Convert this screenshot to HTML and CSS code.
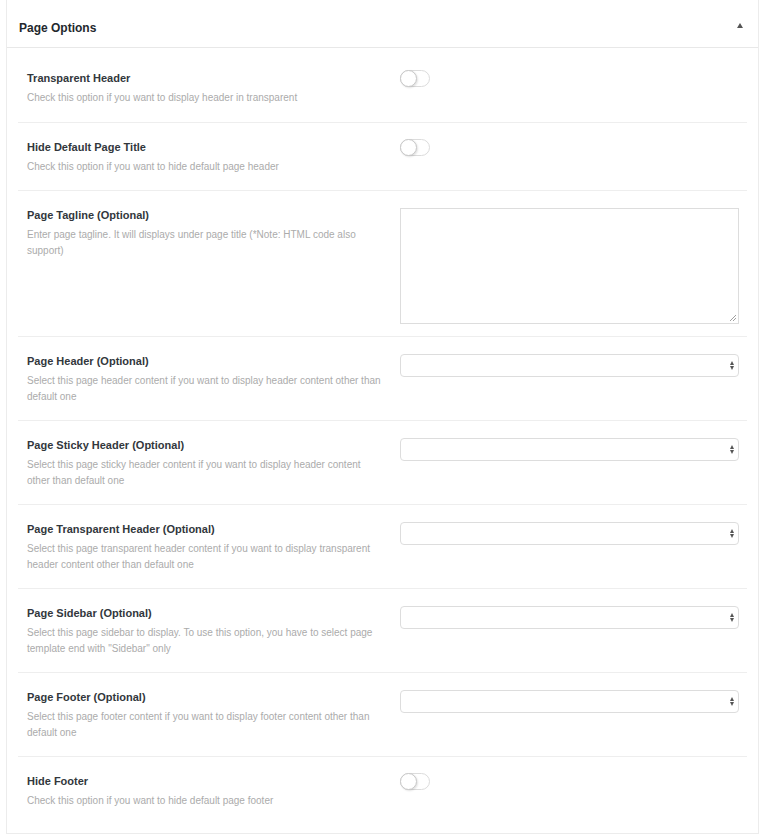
FILE: index.html
```html
<!DOCTYPE html>
<html>
<head>
<meta charset="utf-8">
<link rel="stylesheet" href="styles.css">
</head>
<body>
<div class="panel">
  <div class="panel-head">
    <h2 class="panel-title">Page Options</h2>
    <span class="caret"></span>
  </div>
  <div class="panel-body">
    <div class="row">
      <div class="info">
        <div class="label">Transparent Header</div>
        <div class="desc">Check this option if you want to display header in transparent</div>
      </div>
      <div class="control"><span class="toggle"><span class="knob"></span></span></div>
    </div>
    <div class="row">
      <div class="info">
        <div class="label">Hide Default Page Title</div>
        <div class="desc">Check this option if you want to hide default page header</div>
      </div>
      <div class="control"><span class="toggle"><span class="knob"></span></span></div>
    </div>
    <div class="row row-tall">
      <div class="info">
        <div class="label">Page Tagline (Optional)</div>
        <div class="desc">Enter page tagline. It will displays under page title (*Note: HTML code also support)</div>
      </div>
      <div class="control"><div class="textarea"><svg class="grip" width="8" height="8" viewBox="0 0 8 8"><path d="M7 1 L1 7 M7 4 L4 7" stroke="#888" stroke-width="0.8" fill="none"/></svg></div></div>
    </div>
    <div class="row">
      <div class="info">
        <div class="label">Page Header (Optional)</div>
        <div class="desc">Select this page header content if you want to display header content other than default one</div>
      </div>
      <div class="control"><div class="select"><span class="arrows"></span></div></div>
    </div>
    <div class="row">
      <div class="info">
        <div class="label">Page Sticky Header (Optional)</div>
        <div class="desc">Select this page sticky header content if you want to display header content other than default one</div>
      </div>
      <div class="control"><div class="select"><span class="arrows"></span></div></div>
    </div>
    <div class="row">
      <div class="info">
        <div class="label">Page Transparent Header (Optional)</div>
        <div class="desc">Select this page transparent header content if you want to display transparent header content other than default one</div>
      </div>
      <div class="control"><div class="select"><span class="arrows"></span></div></div>
    </div>
    <div class="row">
      <div class="info">
        <div class="label">Page Sidebar (Optional)</div>
        <div class="desc">Select this page sidebar to display. To use this option, you have to select page template end with "Sidebar" only</div>
      </div>
      <div class="control"><div class="select"><span class="arrows"></span></div></div>
    </div>
    <div class="row">
      <div class="info">
        <div class="label">Page Footer (Optional)</div>
        <div class="desc">Select this page footer content if you want to display footer content other than default one</div>
      </div>
      <div class="control"><div class="select"><span class="arrows"></span></div></div>
    </div>
    <div class="row">
      <div class="info">
        <div class="label">Hide Footer</div>
        <div class="desc">Check this option if you want to hide default page footer</div>
      </div>
      <div class="control"><span class="toggle"><span class="knob"></span></span></div>
    </div>
  </div>
</div>
</body>
</html>
```
FILE: styles.css
```css
html, body {
  margin: 0;
  padding: 0;
  background: #fff;
}
body {
  font-family: "Liberation Sans", Arial, sans-serif;
  width: 768px;
  height: 838px;
  overflow: hidden;
}
.panel {
  margin-left: 6px;
  width: 751px;
  border: 1px solid #ececec;
  border-top: none;
  background: #fff;
}
.panel-head {
  height: 48px;
  border-bottom: 1px solid #e8e8e8;
  display: flex;
  align-items: center;
  justify-content: space-between;
  padding: 0 15px 0 12px;
  box-sizing: border-box;
}
.panel-title {
  margin: 0;
  font-size: 12px;
  font-weight: bold;
  color: #23282d;
  padding-top: 8px;
}
.caret {
  width: 0;
  height: 0;
  border-left: 3.5px solid transparent;
  border-right: 3.5px solid transparent;
  border-bottom: 5px solid #555;
  margin-top: 3px;
}
.panel-body {
  padding: 6px 11px 8px;
}
.row {
  display: grid;
  grid-template-columns: 356px 1fr;
  column-gap: 17px;
  padding: 17px 8px 16px 9px;
  border-bottom: 1px solid #eeeeee;
}
.row:last-child {
  border-bottom: none;
}
.row-tall .control {
  margin-bottom: -4px;
}
.label {
  font-size: 11px;
  font-weight: bold;
  color: #32373c;
  line-height: 14px;
}
.desc {
  font-size: 10px;
  color: #ababab;
  line-height: 15.5px;
  margin-top: 5px;
}
.control {
  display: flex;
  align-items: flex-start;
}
.toggle {
  margin-top: -1px;
  width: 28px;
  height: 15px;
  border: 1px solid #dcdcdc;
  border-radius: 9px;
  position: relative;
  display: block;
  background: #fff;
}
.knob {
  position: absolute;
  left: -1px;
  top: -1px;
  width: 15px;
  height: 15px;
  border-radius: 50%;
  border: 1px solid #c8c8c8;
  background: #fff;
  box-shadow: 1px 1px 2px rgba(0,0,0,0.12);
}
.textarea {
  width: 100%;
  height: 116px;
  border: 1px solid #dddddd;
  box-sizing: border-box;
  position: relative;
}
.grip {
  position: absolute;
  right: 1px;
  bottom: 1px;
}
.select {
  width: 100%;
  height: 23px;
  border: 1px solid #dddddd;
  border-radius: 4px;
  box-sizing: border-box;
  position: relative;
}
.arrows {
  position: absolute;
  right: 5px;
  top: 6px;
  width: 0;
  height: 0;
}
.arrows::before, .arrows::after {
  content: "";
  position: absolute;
  left: -3px;
  border-left: 2.5px solid transparent;
  border-right: 2.5px solid transparent;
}
.arrows::before {
  top: 0;
  border-bottom: 4px solid #555;
}
.arrows::after {
  top: 5px;
  border-top: 4px solid #555;
}
```
